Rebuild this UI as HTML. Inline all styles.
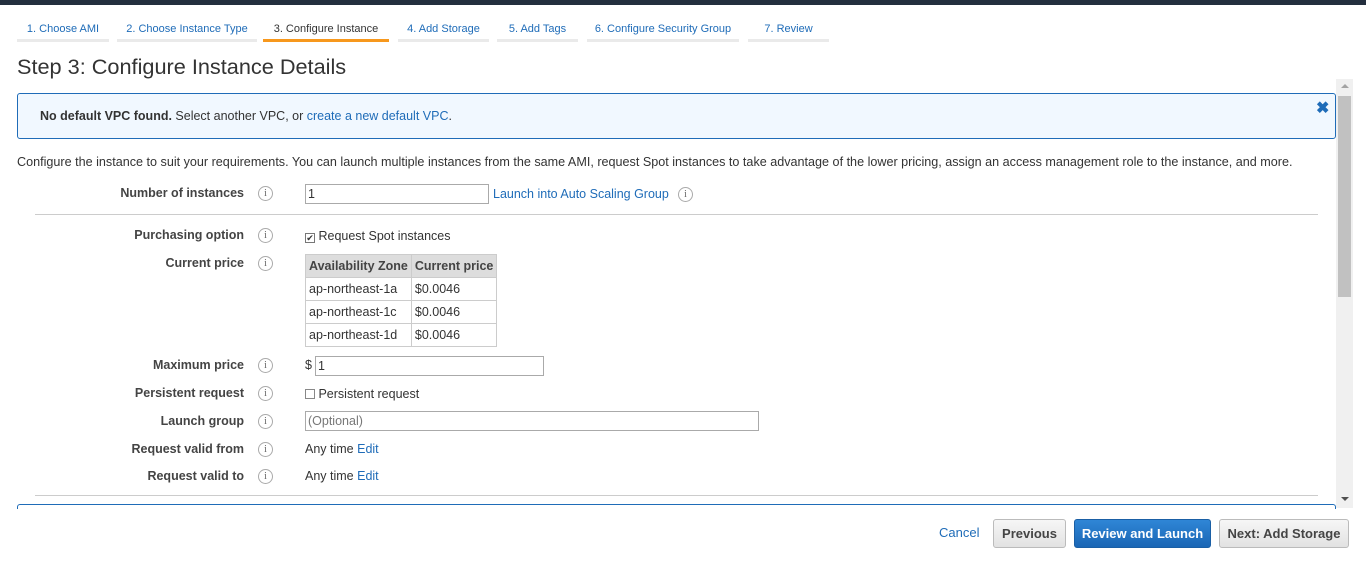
<!DOCTYPE html>
<html><head><style>
*{margin:0;padding:0;box-sizing:border-box}
body{width:1366px;height:562px;overflow:hidden;background:#fff;font-family:"Liberation Sans",Arial,sans-serif;font-size:12px;color:#333;position:relative}
.a{position:absolute}
.tab{position:absolute;top:17px;height:25px;border-bottom:3px solid #eaeaea;font-size:11px;color:#1f6cb8;text-align:center;line-height:24px}
.lbl{position:absolute;right:1122px;font-weight:bold;font-size:12.5px;color:#444;text-align:right;white-space:nowrap}
.inf{position:absolute;left:258px;width:15px;height:15px;border:1px solid #aaa;border-radius:50%;font-size:10px;color:#666;text-align:center;line-height:13px;font-family:"Liberation Serif",serif}
.v{position:absolute;left:305px;font-size:12.5px;color:#333;white-space:nowrap}
.lk{color:#1f6cb8}
.inp{position:absolute;border:1px solid #aaa;height:20px;font-size:12.5px;line-height:18px;padding-left:2px}
table{border-collapse:collapse;font-size:12.5px}
td,th{border:1px solid #ccc;padding:0 3px;height:23px;text-align:left}
th{background:#ddd;font-weight:bold;color:#444}
.btn{position:absolute;top:519px;height:29px;border:1px solid #bbb;border-radius:3px;background:linear-gradient(#f6f6f6,#e2e2e2);font-weight:bold;font-size:13px;color:#444;text-align:center;line-height:27px}
</style></head><body>
<div class="a" style="left:0;top:0;width:1366px;height:5px;background:#232f3e"></div>
<div class="tab" style="left:17px;width:92px">1. Choose AMI</div>
<div class="tab" style="left:117px;width:140px">2. Choose Instance Type</div>
<div class="tab" style="left:263px;width:126px;border-bottom-color:#f7981d;color:#333">3. Configure Instance</div>
<div class="tab" style="left:398px;width:91px">4. Add Storage</div>
<div class="tab" style="left:497px;width:81px">5. Add Tags</div>
<div class="tab" style="left:587px;width:152px">6. Configure Security Group</div>
<div class="tab" style="left:748px;width:81px">7. Review</div>
<div class="a" style="left:17px;top:54px;font-size:21.7px;color:#333">Step 3: Configure Instance Details</div>
<div class="a" style="left:17px;top:93px;width:1319px;height:46px;border:1px solid #1f6cb8;border-radius:3px;background:#f1f8ff"></div>
<div class="a" style="left:40px;top:109px;font-size:12.5px"><b>No default VPC found.</b> Select another VPC, or <span class="lk">create a new default VPC</span>.</div>
<div class="a" style="left:1316px;top:98px;font-size:16px;font-weight:bold;color:#1f6cb8">✖</div>
<div class="a" style="left:17px;top:155px;font-size:12.6px;white-space:nowrap">Configure the instance to suit your requirements. You can launch multiple instances from the same AMI, request Spot instances to take advantage of the lower pricing, assign an access management role to the instance, and more.</div>
<div class="lbl" style="top:186px">Number of instances</div><div class="inf" style="top:186px">i</div>
<div class="inp" style="left:305px;top:184px;width:184px">1</div>
<div class="v" style="left:493px;top:187px"><span class="lk">Launch into Auto Scaling Group</span></div><div class="inf" style="left:678px;top:187px">i</div>
<div class="a" style="left:35px;top:214px;width:1283px;height:1px;background:#ccc"></div>
<div class="lbl" style="top:228px">Purchasing option</div><div class="inf" style="top:228px">i</div>
<div class="v" style="top:229px"><span style="display:inline-block;width:10px;height:10px;border:1px solid #777;font-size:9px;line-height:8px;text-align:center;vertical-align:-1px">✔</span> Request Spot instances</div>
<div class="lbl" style="top:256px">Current price</div><div class="inf" style="top:256px">i</div>
<table class="a" style="left:305px;top:254px"><tr><th>Availability Zone</th><th>Current price</th></tr><tr><td>ap-northeast-1a</td><td>$0.0046</td></tr><tr><td>ap-northeast-1c</td><td>$0.0046</td></tr><tr><td>ap-northeast-1d</td><td>$0.0046</td></tr></table>
<div class="lbl" style="top:358px">Maximum price</div><div class="inf" style="top:358px">i</div>
<div class="v" style="top:358px">$</div><div class="inp" style="left:315px;top:356px;width:229px">1</div>
<div class="lbl" style="top:386px">Persistent request</div><div class="inf" style="top:386px">i</div>
<div class="v" style="top:387px"><span style="display:inline-block;width:10px;height:10px;border:1px solid #888;vertical-align:-1px"></span> Persistent request</div>
<div class="lbl" style="top:414px">Launch group</div><div class="inf" style="top:414px">i</div>
<div class="inp" style="left:305px;top:411px;width:454px;color:#777">(Optional)</div>
<div class="lbl" style="top:442px">Request valid from</div><div class="inf" style="top:442px">i</div>
<div class="v" style="top:442px">Any time <span class="lk">Edit</span></div>
<div class="lbl" style="top:469px">Request valid to</div><div class="inf" style="top:469px">i</div>
<div class="v" style="top:469px">Any time <span class="lk">Edit</span></div>
<div class="a" style="left:35px;top:495px;width:1283px;height:1px;background:#ccc"></div>
<div class="a" style="left:17px;top:504px;width:1319px;height:6px;border:1px solid #1f6cb8;border-bottom:none;border-radius:3px 3px 0 0"></div>
<div class="a" style="left:0;top:509px;width:1336px;height:53px;background:#fff"></div>
<div class="a" style="left:1336px;top:79px;width:17px;height:429px;background:#f0f0f0"></div>
<div class="a" style="left:1338px;top:96px;width:13px;height:201px;background:#c1c1c1"></div>
<div class="a" style="left:1341px;top:84px;border:4px solid transparent;border-bottom:4px solid #a3a3a3;border-top:0"></div>
<div class="a" style="left:1341px;top:497px;border:4px solid transparent;border-top:4px solid #505050;border-bottom:0"></div>
<div class="a lk" style="left:939px;top:525px;font-size:13px">Cancel</div>
<div class="btn" style="left:993px;width:73px">Previous</div>
<div class="btn" style="left:1074px;width:137px;background:linear-gradient(#2f86d6,#1a66b5);border-color:#1a5fa5;color:#fff">Review and Launch</div>
<div class="btn" style="left:1219px;width:130px">Next: Add Storage</div>
</body></html>
